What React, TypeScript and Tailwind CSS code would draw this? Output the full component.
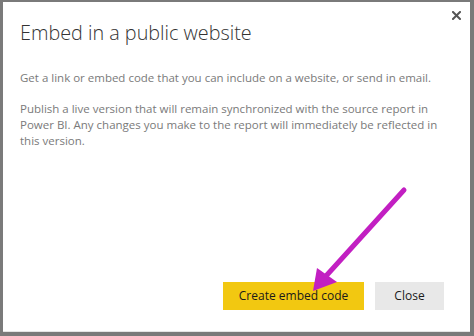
import React from 'react';

const App: React.FC = () => {
  return (
    <div className="w-[474px] h-[336px] bg-[#7a7a7a] pl-[3px] pt-[2px] pr-[4px] pb-[4px]" style={{ fontFamily: '"Open Sans", "Noto Sans", sans-serif' }}>
      <div className="relative w-full h-full bg-white border-b border-[#e4e4e4] flex flex-col">
        {/* close button */}
        <button className="absolute right-[6px] top-[5px] w-[16px] h-[16px] flex items-center justify-center">
          <svg width="9" height="9" viewBox="0 0 9 9">
            <path d="M1 1 L8 8 M8 1 L1 8" stroke="#555" strokeWidth="2" strokeLinecap="square" />
          </svg>
        </button>

        <div className="pl-[17px] pr-[20px] pt-[18px]">
          <h1 className="text-[19.8px] leading-[26px] font-light text-[#333]">Embed in a public website</h1>
          <p className="mt-[24px] text-[11.5px] leading-[16px] text-[#7a7a7a]">
            Get a link or embed code that you can include on a website, or send in email.
          </p>
          <p className="mt-[15px] text-[11.5px] leading-[16px] text-[#7a7a7a]">
            Publish a live version that will remain synchronized with the source report in Power BI. Any changes you make to the report will immediately be reflected in this version.
          </p>
        </div>

        <div className="mt-auto mb-[21px] flex justify-end gap-[11px] pr-[26px]">
          <button className="w-[141px] h-[28px] bg-[#f2c811] text-[12px] text-[#1a1a1a]">Create embed code</button>
          <button className="w-[69px] h-[28px] bg-[#e8e8e8] text-[12px] text-[#1a1a1a]">Close</button>
        </div>

        {/* annotation arrow */}
        <svg className="absolute left-0 top-0 pointer-events-none" width="467" height="330" viewBox="0 0 467 330">
          <g transform="translate(-3,-2)">
            <line x1="404" y1="190" x2="326" y2="276" stroke="#c21fc2" strokeWidth="5" strokeLinecap="round" />
            <polygon points="313,291 317,268 337,282" fill="#c21fc2" />
          </g>
        </svg>
      </div>
    </div>
  );
};

export default App;
